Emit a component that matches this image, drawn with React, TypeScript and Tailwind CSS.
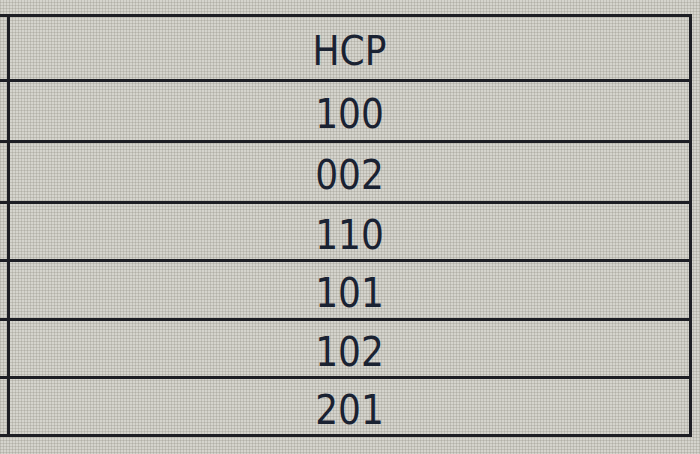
import React from "react";

const rows: { label: string; h: string }[] = [
  { label: "HCP", h: "h-[65px]" },
  { label: "100", h: "h-[61px]" },
  { label: "002", h: "h-[61px]" },
  { label: "110", h: "h-[58px]" },
  { label: "101", h: "h-[59px]" },
  { label: "102", h: "h-[58px]" },
  { label: "201", h: "h-[58px]" },
];

export default function App() {
  return (
    <div className="w-[700px] h-[454px] overflow-hidden bg-[#d5d4cd] bg-[linear-gradient(90deg,rgba(140,138,128,0.28)_1px,transparent_1px),linear-gradient(0deg,rgba(140,138,128,0.28)_1px,transparent_1px)] bg-[size:3px_3px] pt-[14px]">
      <div className="flex w-[692px] flex-col border-t-[3px] border-[#1d1e24]">
        {rows.map((r) => (
          <div
            key={r.label}
            className={`flex ${r.h} border-b-[3px] border-[#1d1e24]`}
          >
            <div className="w-[10px] border-r-[3px] border-[#1d1e24]" />
            <div className="flex flex-1 items-center justify-center border-r-[3px] border-[#1d1e24] pt-[6px]">
              <span className="font-['DejaVu_Sans_Condensed','DejaVu_Sans',sans-serif] text-[40px] leading-none text-[#1a2232]">
                {r.label}
              </span>
            </div>
          </div>
        ))}
      </div>
    </div>
  );
}
